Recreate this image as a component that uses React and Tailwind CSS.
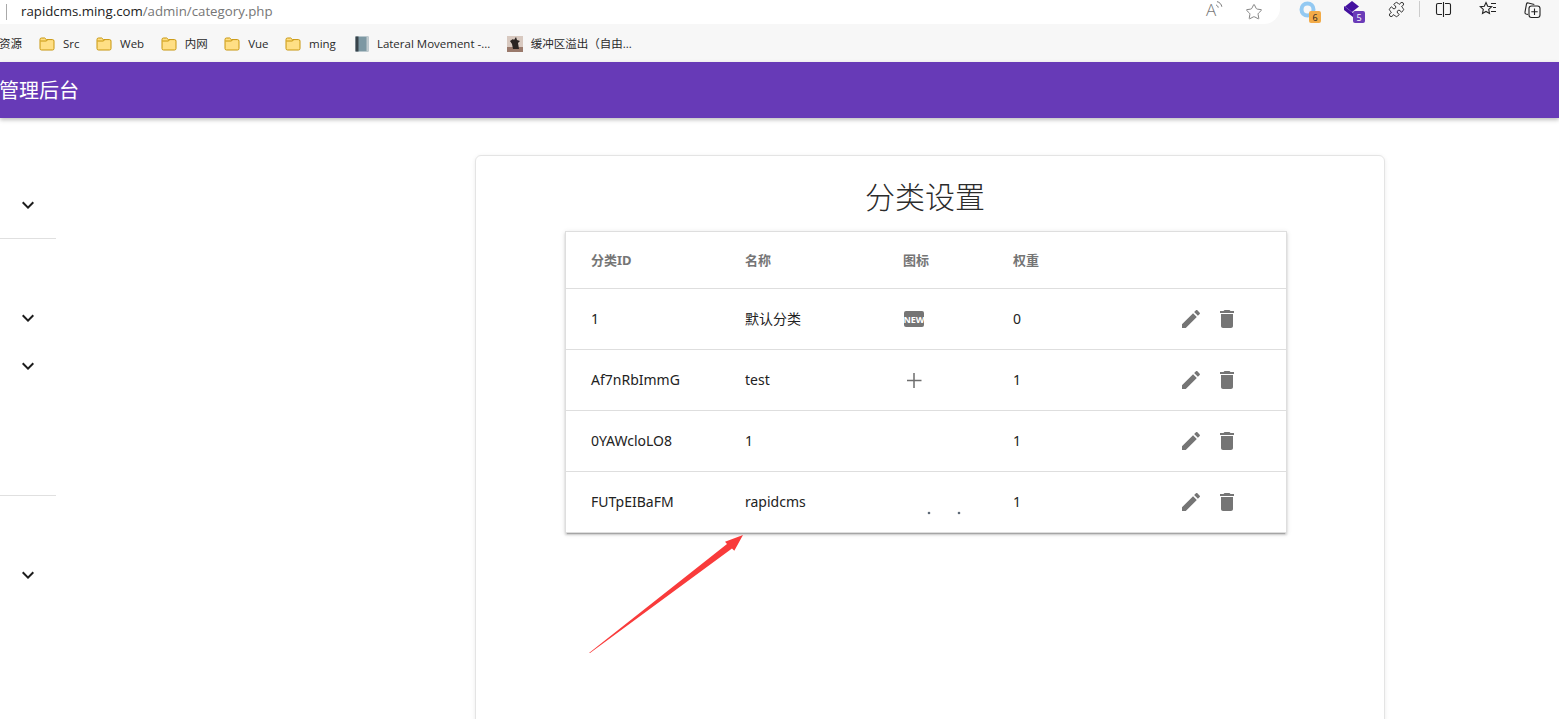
import { Puzzle, Star } from "lucide-react";

const bookmarks = [
  { name: "Src", type: "folder" },
  { name: "Web", type: "folder" },
  { name: "内网", type: "folder" },
  { name: "Vue", type: "folder" },
  { name: "ming", type: "folder" },
  { name: "Lateral Movement -...", type: "book" },
  { name: "缓冲区溢出（自由...", type: "photo" },
];

const navGroups = [
  { className: "pt-[15px] pb-[9px] border-b border-[#e0e0e0]", rows: [false, true] },
  { className: "pt-[7px] pb-[9px] border-b border-[#e0e0e0]", rows: [false, true, true, false, false] },
  { className: "pt-[7px]", rows: [false, true] },
];

const rows = [
  { id: "1", name: "默认分类", weight: "0", icon: "new" },
  { id: "Af7nRbImmG", name: "test", weight: "1", icon: "plus" },
  { id: "0YAWcloLO8", name: "1", weight: "1", icon: null },
  { id: "FUTpEIBaFM", name: "rapidcms", weight: "1", icon: "dots" },
];

function FolderIcon() {
  return (
    <svg width="16" height="16" viewBox="0 0 16 16" className="shrink-0">
      <path
        d="M1 3.500A1.500 1.500 0 0 1 2.500 2h3.200l1.600 1.600h6.200A1.500 1.500 0 0 1 15 5.100v7.400a1.500 1.500 0 0 1-1.500 1.500h-11A1.500 1.500 0 0 1 1 12.500z"
        fill="#ffdf85"
        stroke="#c8960c"
        strokeWidth="1"
      />
      <path d="M1.500 5h6l1-1.400" fill="none" stroke="#c8960c" strokeWidth="1" />
    </svg>
  );
}

function BookIcon() {
  return (
    <svg width="14" height="16" viewBox="0 0 14 16" className="ml-[2.500px] shrink-0">
      <rect x="0.500" y="0.500" width="13" height="15" fill="#7d98a3" />
      <rect x="0.500" y="0.500" width="3" height="15" fill="#38434a" />
      <rect x="11.500" y="0.500" width="2" height="15" fill="#c3ccd0" />
    </svg>
  );
}

function PhotoIcon() {
  return (
    <svg width="16" height="16" viewBox="0 0 16 16" className="shrink-0">
      <rect width="16" height="16" fill="#d8c9c0" />
      <rect y="11" width="16" height="5" fill="#9a7a6c" />
      <path d="M3 5l3-2 1 1 2-3 1 3 3 1-2 2 1 6H6L5 8z" fill="#2a2422" />
    </svg>
  );
}

function Chevron() {
  return (
    <svg width="24" height="24" viewBox="0 0 24 24" fill="#1c1c1c">
      <path d="M16.590 8.590L12 13.170 7.410 8.590 6 10l6 6 6-6z" />
    </svg>
  );
}

function PencilIcon() {
  return (
    <svg width="24" height="24" viewBox="0 0 24 24" fill="#757575">
      <path d="M3 17.250V21h3.750L17.810 9.940l-3.750-3.750L3 17.250zM20.710 7.040c.39-.39.39-1.020 0-1.410l-2.340-2.340c-.39-.39-1.020-.39-1.410 0l-1.830 1.830 3.750 3.750 1.830-1.830z" />
    </svg>
  );
}

function TrashIcon() {
  return (
    <svg width="24" height="24" viewBox="0 0 24 24" fill="#757575">
      <path d="M6 19c0 1.100.9 2 2 2h8c1.100 0 2-.9 2-2V7H6v12zM19 4h-3.500l-1-1h-5l-1 1H5v2h14V4z" />
    </svg>
  );
}

function RowIcon({ type }) {
  if (type === "new") {
    return (
      <div className="ml-px flex h-4 w-5 items-center justify-center rounded-[2px] bg-[#757575] text-[9px] font-bold leading-none text-white">
        NEW
      </div>
    );
  }
  if (type === "plus") {
    return (
      <svg width="22" height="22" viewBox="0 0 22 22" fill="none" stroke="#6e6e6e" strokeWidth="1.500">
        <path d="M11 4v15M4 11.500h14.500" />
      </svg>
    );
  }
  if (type === "dots") {
    return (
      <svg width="60" height="60" viewBox="0 0 60 60" fill="#5f6b78">
        <circle cx="26" cy="41" r="1.300" />
        <circle cx="56" cy="41" r="1.300" />
      </svg>
    );
  }
  return null;
}

function BrowserBar() {
  return (
    <div className="bg-[#f7f7f7] font-['Open_Sans','Noto_Sans_CJK_SC',sans-serif]">
      <div className="flex h-6 items-start">
        <div className="flex h-6 w-[1280px] items-center rounded-br-2xl bg-white">
          <div className="ml-1.5 h-4 w-px bg-[#aaaaaa]" />
          <div className="ml-[14px] text-[13.25px] leading-none text-[#767676]">
            <span className="text-[#222222]">rapidcms.ming.com</span>/admin/category.php
          </div>
          <div className="ml-auto mr-[17px] flex items-center gap-[21px]">
            <div className="-mt-[4px] flex h-[20px] w-[18px] items-start text-[17px] font-light leading-[20px] text-[#777777]">
              <span>A</span>
              <svg width="8" height="11" viewBox="0 0 8 11" fill="none" stroke="#777777" strokeWidth="1">
                <path d="M0 5c1.300.4 2.100 1.400 2.300 2.700M1 1.500c2.800.6 4.600 2.700 5 5.300" />
              </svg>
            </div>
            <Star size={18} strokeWidth={1.200} color="#777777" />
          </div>
        </div>
        <div className="relative ml-[19px] h-6 w-[26px]">
          <svg width="18" height="18" viewBox="0 0 18 18" fill="none" className="mt-px">
            <circle cx="8.500" cy="8.500" r="6" stroke="#93c9f2" strokeWidth="4" />
          </svg>
          <div className="absolute left-[10px] top-[11px] flex h-3 w-3 items-center justify-center rounded-[2px] bg-[#f2ab48] text-[9px] leading-none text-[#222222]">
            6
          </div>
        </div>
        <div className="relative ml-[17px] h-6 w-[26px]">
          <svg width="18" height="18" viewBox="0 0 18 18" fill="#43119f" className="ml-px">
            <path d="M9 1l7 5.500-7 5.500-7-5.500zM1 6v4l9 7v-4z" />
          </svg>
          <div className="absolute left-[11px] top-[11px] flex h-3 w-3 items-center justify-center rounded-[2px] bg-[#6a3bb8] text-[9px] leading-none text-white">
            5
          </div>
        </div>
        <Puzzle size={17} strokeWidth={1.300} color="#222222" className="ml-[20px] mt-[1px]" />
        <div className="ml-[14px] mt-px h-4 w-px bg-[#cccccc]" />
        <svg width="17" height="17" viewBox="0 0 17 17" fill="none" stroke="#222222" strokeWidth="1.100" className="ml-[15px] mt-px">
          <path d="M7 2.500H3a1.500 1.500 0 0 0-1.500 1.500v8A1.500 1.500 0 0 0 3 13.500h4M10 2.500h4A1.500 1.500 0 0 1 15.500 4v8a1.500 1.500 0 0 1-1.500 1.500h-4M8.500 1v15" />
        </svg>
        <svg width="18" height="17" viewBox="0 0 18 17" fill="none" stroke="#222222" strokeWidth="1.100" className="ml-[27px] mt-px">
          <path d="M7 1.500l1.700 3.700 4 .5-3 2.700.8 4-3.500-2-3.500 2 .8-4-3-2.700 4-.5zM12 2.500h5M14 6.500h3M12 10.500h5" />
        </svg>
        <svg width="18" height="18" viewBox="0 0 18 18" fill="none" stroke="#222222" strokeWidth="1.100" className="ml-[26px] mt-px">
          <path d="M5 13.500l-2-.5a1.500 1.500 0 0 1-1-1.800L3.500 3a1.500 1.500 0 0 1 1.800-1l6 1.500" />
          <rect x="6" y="5" width="11" height="11.500" rx="2.500" />
          <path d="M11.500 7.500v6.500M8.300 10.800h6.400" />
        </svg>
      </div>
      <div className="flex h-[38px] items-center gap-[16.500px] whitespace-nowrap pt-[2px] text-[11.500px] text-[#2a2a2a]">
        <span className="-ml-px mr-[0.500px]">资源</span>
        {bookmarks.map((b) => (
          <div key={b.name} className="flex items-center gap-2">
            {b.type === "folder" && <FolderIcon />}
            {b.type === "book" && <BookIcon />}
            {b.type === "photo" && <PhotoIcon />}
            <span>{b.name}</span>
          </div>
        ))}
      </div>
    </div>
  );
}

function Sidebar() {
  return (
    <div className="w-14 shrink-0">
      {navGroups.map((group, i) => (
        <div key={i} className={group.className}>
          {group.rows.map((chevron, j) => (
            <div key={j} className="flex h-12 items-center justify-center">
              {chevron && <Chevron />}
            </div>
          ))}
        </div>
      ))}
    </div>
  );
}

export default function App() {
  const gridCols = "grid grid-cols-[154px_158px_110px_1fr_107px] items-center pl-[25px]";

  return (
    <div className="relative h-screen overflow-hidden bg-white font-['Noto_Sans','Noto_Sans_CJK_SC',sans-serif]">
      <BrowserBar />

      <div className="flex h-14 items-center bg-[#673ab7] pt-[2px] text-xl text-white shadow-[0_2px_4px_rgba(0,0,0,0.25)]">
        <span className="-ml-px">管理后台</span>
      </div>

      <div className="flex">
        <Sidebar />
        <div className="ml-[419px] mt-[37px] h-[700px] w-[910px] shrink-0 rounded-md border border-[#e4e4e4] pl-[89px] shadow-[0_1px_4px_rgba(0,0,0,0.08)]">
          <h1 className="mt-[22px] w-[720px] text-center text-[30px] font-light leading-[38px] text-[#2b2b2b]">分类设置</h1>
          <div className="mt-[15px] w-[722px] border border-[#dedede] text-sm text-[#222222] shadow-[0_2px_2px_0_rgba(0,0,0,0.14),0_3px_1px_-2px_rgba(0,0,0,0.2),0_1px_5px_0_rgba(0,0,0,0.12)]">
            <div className={`${gridCols} h-14 text-[13px] font-bold text-[#757575]`}>
              <div>分类ID</div>
              <div>名称</div>
              <div>图标</div>
              <div>权重</div>
            </div>
            {rows.map((row) => (
              <div key={row.id} className={`${gridCols} h-[61px] border-t border-[#dedede]`}>
                <div>{row.id}</div>
                <div>{row.name}</div>
                <div className="flex items-center">
                  <RowIcon type={row.icon} />
                </div>
                <div>{row.weight}</div>
                <div className="flex items-center gap-3">
                  <PencilIcon />
                  <TrashIcon />
                </div>
              </div>
            ))}
          </div>
        </div>
      </div>

      <svg
        width="165"
        height="128"
        viewBox="585 530 165 128"
        className="absolute left-[585px] top-[530px]"
      >
        <polygon points="589,653 590,653 732,548.500 734.300,550.700 743,535 725,541.700 727,544" fill="#f93b3b" />
      </svg>
    </div>
  );
}
